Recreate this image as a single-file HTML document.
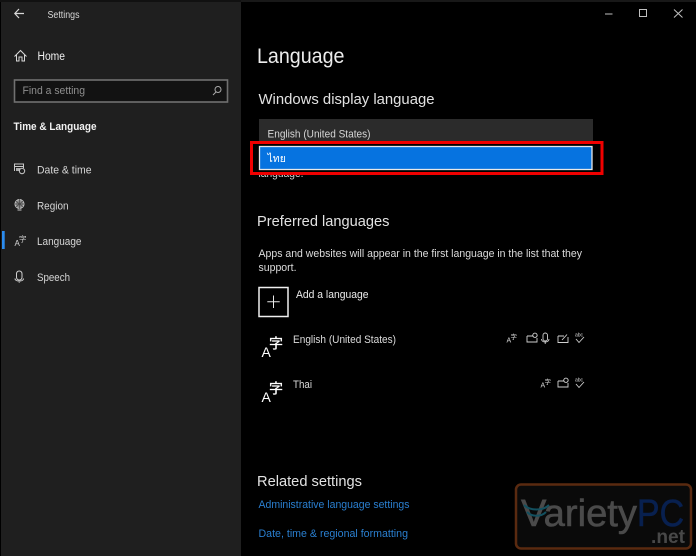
<!DOCTYPE html>
<html><head><meta charset="utf-8"><style>
html,body{margin:0;padding:0;background:#000;width:696px;height:556px;overflow:hidden}
svg{display:block}
text{font-family:"Liberation Sans","Noto Sans CJK JP",sans-serif}
</style></head><body>
<svg width="696" height="556" viewBox="0 0 696 556" xmlns="http://www.w3.org/2000/svg">
<rect width="696" height="556" fill="#000"/>
<rect x="1" y="2" width="240" height="554" fill="#1f1f1f"/>
<rect x="241" y="0" width="455" height="2" fill="#181818"/>
<rect x="0" y="0" width="241" height="2" fill="#111"/>
<g style="filter:blur(.35px)">

<path fill="none" stroke="#d8d8d8" stroke-width="1.200" d="M15 13.500H24M19 9L14.800 13.500L19 18"/>
<text x="47.500" y="18" font-size="10" textLength="32" lengthAdjust="spacingAndGlyphs" fill="#d8d8d8">Settings</text>

<path fill="none" stroke="#d8d8d8" d="M14.500 56.500L20.500 50.500L26.500 56.500M16.500 55V61H19V57H22V61H24.500V55"/>
<text x="37.500" y="60" font-size="11.500" textLength="27.500" lengthAdjust="spacingAndGlyphs" fill="#f0f0f0">Home</text>

<rect x="14.500" y="80" width="213" height="22" fill="#121212" stroke="#707070" stroke-width="1.600"/>
<text x="22.500" y="94" font-size="11" textLength="62.500" lengthAdjust="spacingAndGlyphs" fill="#8e8e8e">Find a setting</text>
<circle cx="218" cy="89.500" r="3" fill="none" stroke="#aaa"/><path d="M216 92L213 95" stroke="#aaa" fill="none"/>

<text x="13.500" y="130" font-size="11" font-weight="bold" textLength="83" lengthAdjust="spacingAndGlyphs" fill="#f2f2f2">Time &amp; Language</text>

<path fill="none" stroke="#c8c8c8" d="M14.500 171V164H23.500V168M14.500 166.500H23.500"/>
<rect x="16" y="168" width="4" height="3" fill="#aaa"/>
<circle cx="22" cy="171" r="2.700" fill="none" stroke="#c8c8c8"/>
<text x="37" y="173.500" font-size="11" textLength="54.500" lengthAdjust="spacingAndGlyphs" fill="#d6d6d6">Date &amp; time</text>

<circle cx="19.500" cy="204" r="4.500" fill="#8a8a8a" stroke="#c8c8c8"/>
<path d="M16 201L23 207M23 201L16 207M19.500 199V209M15 204H24" stroke="#444" stroke-width=".7"/>
<path fill="none" stroke="#c8c8c8" d="M17.500 210H21.500"/>
<text x="37" y="209.500" font-size="11" textLength="31.500" lengthAdjust="spacingAndGlyphs" fill="#d6d6d6">Region</text>

<rect x="2" y="231" width="2.700" height="18" fill="#2b8cf0"/>
<text x="14.500" y="246" font-size="8" fill="#d8d8d8">A</text>
<text x="19" y="241.500" font-size="7.500" fill="#d8d8d8">字</text>
<text x="37" y="245" font-size="11" textLength="44.500" lengthAdjust="spacingAndGlyphs" fill="#d6d6d6">Language</text>

<rect x="16.500" y="271" width="5.500" height="9" rx="2.700" fill="none" stroke="#d0d0d0"/>
<path fill="none" stroke="#d0d0d0" d="M15 278.500C15 282 23.500 282 23.500 278.500M19.200 282V282.800"/>
<text x="37" y="281" font-size="11" textLength="33" lengthAdjust="spacingAndGlyphs" fill="#d6d6d6">Speech</text>

<path d="M605 14H612.500" stroke="#c0c0c0" stroke-width="1"/>
<rect x="639.500" y="9.500" width="7" height="7" fill="none" stroke="#c0c0c0"/>
<path d="M674 9.500L682.500 17.500M682.500 9.500L674 17.500" stroke="#c0c0c0" fill="none"/>

<text x="257" y="63" font-size="21" textLength="87.500" lengthAdjust="spacingAndGlyphs" fill="#ededed">Language</text>
<text x="258.500" y="104" font-size="15" textLength="176" lengthAdjust="spacingAndGlyphs" fill="#e2e2e2">Windows display language</text>

<text x="258.500" y="177" font-size="11" textLength="45" lengthAdjust="spacingAndGlyphs" fill="#cfcfcf">language.</text>
<rect x="259" y="119" width="334" height="28" fill="#2b2b2b"/>
<text x="267.500" y="137.500" font-size="11" textLength="103" lengthAdjust="spacingAndGlyphs" fill="#d6d6d6">English (United States)</text>
<rect x="251.500" y="142.500" width="350.500" height="31" fill="#000" stroke="#f00000" stroke-width="3"/>
<rect x="259.500" y="146.500" width="332.500" height="23" fill="#0673e0" stroke="#e8e8e8" stroke-width="1.300"/>
<text x="267.500" y="162" font-size="10.500" fill="#fff" style="font-family:'Liberation Sans','DejaVu Sans',sans-serif">ไทย</text>

<text x="257" y="226" font-size="15" textLength="132.500" lengthAdjust="spacingAndGlyphs" fill="#e2e2e2">Preferred languages</text>
<text x="258.500" y="257" font-size="11" textLength="323.500" lengthAdjust="spacingAndGlyphs" fill="#dcdcdc">Apps and websites will appear in the first language in the list that they</text>
<text x="258.500" y="271" font-size="11" textLength="38" lengthAdjust="spacingAndGlyphs" fill="#dcdcdc">support.</text>

<rect x="259" y="287.500" width="29" height="29" fill="none" stroke="#f0f0f0" stroke-width="1.500"/>
<path d="M273.500 295.500V308M267.300 301.800H279.700" stroke="#e8e8e8" stroke-width="1"/>
<text x="296" y="298" font-size="11" textLength="72.500" lengthAdjust="spacingAndGlyphs" fill="#ececec">Add a language</text>

<text x="261.500" y="357" font-size="14" fill="#fff">A</text>
<text x="269" y="348.500" font-size="14" fill="#fff" stroke="#fff" stroke-width=".3">字</text>
<text x="293" y="343" font-size="11" textLength="103" lengthAdjust="spacingAndGlyphs" fill="#dcdcdc">English (United States)</text>
<text x="261.500" y="402" font-size="14" fill="#fff">A</text>
<text x="269" y="393.500" font-size="14" fill="#fff" stroke="#fff" stroke-width=".3">字</text>
<text x="293" y="388" font-size="11" textLength="19" lengthAdjust="spacingAndGlyphs" fill="#dcdcdc">Thai</text>

<text x="506.500" y="342.500" font-size="7" fill="#d8d8d8">A</text>
<text x="510.500" y="339" font-size="6.500" fill="#d8d8d8">字</text>
<path fill="none" stroke="#d0d0d0" stroke-width=".9" d="M527 336H533M527 336V342H537V338M535 337.500a2.200 2.200 0 1 0 -.1 0"/>
<rect x="543" y="333" width="4.500" height="8" rx="2.200" fill="none" stroke="#d0d0d0" stroke-width=".9"/>
<path fill="none" stroke="#d0d0d0" stroke-width=".9" d="M541.500 339C541.500 343 549 343 549 339M545.200 342.500V344"/>
<path fill="none" stroke="#d0d0d0" stroke-width=".9" d="M558 336H564M558 336V342.500H568V337M562 340L567 334.500"/>
<text x="575" y="336.500" font-size="5" fill="#d8d8d8">abc</text>
<path fill="none" stroke="#d0d0d0" stroke-width=".9" d="M576 339L579 342.500L584 337"/>

<text x="540.500" y="387.500" font-size="7" fill="#d8d8d8">A</text>
<text x="544.500" y="384" font-size="6.500" fill="#d8d8d8">字</text>
<path fill="none" stroke="#d0d0d0" stroke-width=".9" d="M558 381H564M558 381V387H568V383M566 382.500a2.200 2.200 0 1 0 -.1 0"/>
<text x="575" y="381.500" font-size="5" fill="#d8d8d8">abc</text>
<path fill="none" stroke="#d0d0d0" stroke-width=".9" d="M576 384L579 387.500L584 382"/>

<text x="257" y="486" font-size="15" textLength="105" lengthAdjust="spacingAndGlyphs" fill="#e2e2e2">Related settings</text>
<text x="258.500" y="508" font-size="11" textLength="151" lengthAdjust="spacingAndGlyphs" fill="#2a7fd0">Administrative language settings</text>
<text x="258.500" y="537" font-size="11" textLength="149.500" lengthAdjust="spacingAndGlyphs" fill="#2a7fd0">Date, time &amp; regional formatting</text>

<rect x="516" y="484.500" width="175" height="64" rx="5" fill="#0a0a0a" stroke="#5a2a10" stroke-width="2.500"/>
<text x="521" y="526" font-size="38" textLength="116" lengthAdjust="spacingAndGlyphs" fill="#4a4a4a" stroke="#4a4a4a" stroke-width=".6">Variety</text>
<text x="637" y="526" font-size="38" textLength="47" lengthAdjust="spacingAndGlyphs" fill="#08204f" stroke="#08204f" stroke-width=".6">PC</text>
<text x="651" y="543" font-size="19" font-weight="bold" textLength="34" lengthAdjust="spacingAndGlyphs" fill="#484848">.net</text>
<path d="M524 505C530 511 543 511 549 505M527 512C532 517 541 517 546 512" fill="none" stroke="#13505f" stroke-width="2"/>
</g>
</svg>
</body></html>
